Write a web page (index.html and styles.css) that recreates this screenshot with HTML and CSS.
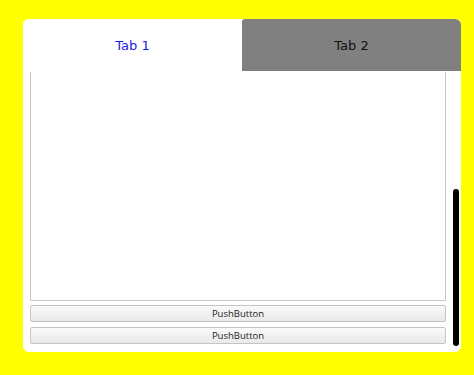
FILE: index.html
```html
<!DOCTYPE html>
<html>
<head>
<meta charset="utf-8">
<link rel="stylesheet" href="styles.css">
</head>
<body>
<div class="panel">
  <div class="tabs">
    <div class="tab tab-active">Tab 1</div>
    <div class="tab tab-inactive">Tab 2</div>
  </div>
  <div class="content">
    <div class="frame"></div>
    <button class="push">PushButton</button>
    <button class="push">PushButton</button>
  </div>
  <div class="scrollbar"></div>
</div>
</body>
</html>
```
FILE: styles.css
```css
html, body {
  margin: 0;
  padding: 0;
  background: #ffff00;
  width: 474px;
  height: 375px;
  overflow: hidden;
}
.panel {
  position: relative;
  margin: 19px 0 0 23px;
  width: 438px;
  height: 333px;
  background: #ffffff;
  border-radius: 6px;
  overflow: hidden;
  display: flex;
  flex-direction: column;
}
.tabs {
  display: flex;
  height: 52px;
}
.tab {
  flex: 1;
  display: flex;
  align-items: center;
  justify-content: center;
  font-family: "DejaVu Sans", sans-serif;
  font-size: 13px;
}
.tab-active {
  background: #ffffff;
  color: #1a1ae6;
}
.tab-inactive {
  background: #808080;
  color: #111111;
  border-top-left-radius: 3px;
}
.content {
  display: flex;
  flex-direction: column;
  padding: 1px 15px 0 7px;
}
.frame {
  height: 228px;
  border: 1px solid #c8c8c8;
  border-top: none;
  margin-bottom: 4px;
}
.push {
  height: 17px;
  margin: 0 0 5px 0;
  padding: 0;
  border: 1px solid #c4c4c4;
  border-radius: 2px;
  background: linear-gradient(#fafafa, #e9e9e9);
  font-family: "Open Sans", sans-serif;
  font-size: 9.5px;
  color: #222222;
  line-height: 15px;
}
.scrollbar {
  position: absolute;
  left: 430px;
  top: 170px;
  width: 6px;
  height: 157px;
  background: #000000;
  border-radius: 3px;
}
```
